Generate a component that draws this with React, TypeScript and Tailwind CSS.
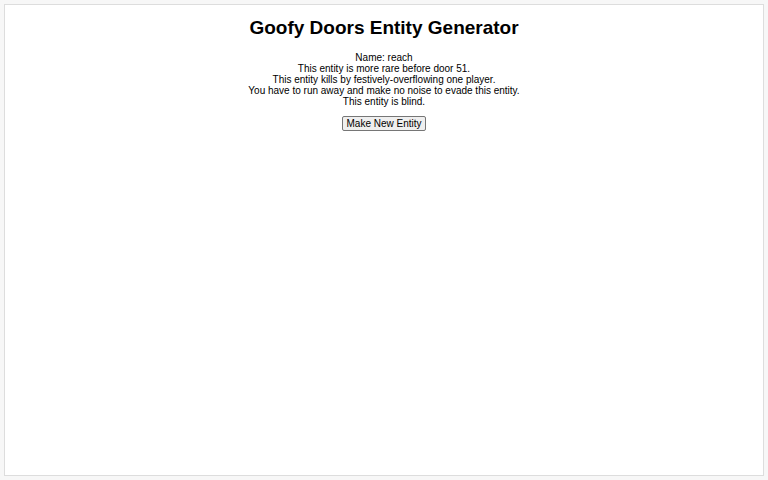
const LINES = [
  "Name: reach",
  "This entity is more rare before door 51.",
  "This entity kills by festively-overflowing one player.",
  "You have to run away and make no noise to evade this entity.",
  "This entity is blind.",
];

export default function App() {
  return (
    <div className="flex min-h-screen bg-[#f7f7f7] p-1 font-['Liberation_Sans',Arial,sans-serif] text-black">
      <main className="flex flex-1 flex-col items-center border border-[#dddddd] bg-white px-2 pt-[11px] text-center">
        <h1 className="text-[19px] leading-6 font-bold">Goofy Doors Entity Generator</h1>
        <div className="mt-3 text-[10px] leading-[11px]">
          {LINES.map((line) => (
            <p key={line}>{line}</p>
          ))}
        </div>
        <button
          type="button"
          className="mt-[9px] rounded-[2px] border border-[#767676] bg-[#efefef] px-[3px] text-[10px] leading-[13px] hover:bg-[#e5e5e5]"
        >
          Make New Entity
        </button>
      </main>
    </div>
  );
}
